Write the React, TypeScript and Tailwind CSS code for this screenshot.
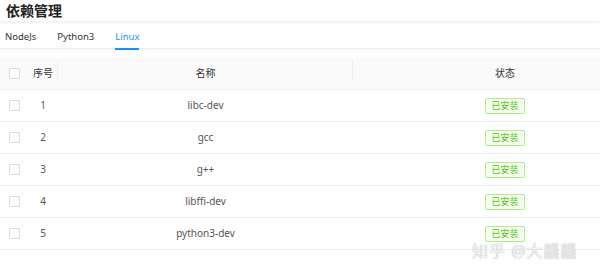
import React from 'react';

const rows = [
  { id: 1, name: 'libc-dev' },
  { id: 2, name: 'gcc' },
  { id: 3, name: 'g++' },
  { id: 4, name: 'libffi-dev' },
  { id: 5, name: 'python3-dev' },
];

const tabs = ['NodeJs', 'Python3', 'Linux'];

const Checkbox: React.FC = () => (
  <span className="block w-[11px] h-[11px] border border-[#d9d9d9] rounded-[2px] bg-white" />
);

const App: React.FC = () => {
  return (
    <div
      className="relative w-[600px] h-[276px] overflow-hidden bg-white text-[#555]"
      style={{ fontFamily: '"Noto Sans", "Noto Sans CJK SC", sans-serif' }}
    >
      {/* title bar */}
      <div className="h-[21px] pl-[6px] flex items-center shadow-[0_2px_3px_rgba(0,0,0,0.06)]">
        <h1 className="text-[14px] leading-none font-bold text-[#222]">依赖管理</h1>
      </div>

      {/* tabs */}
      <div className="mt-[6px] h-[22px] flex gap-[21px] pl-[5px] border-b border-[#eeeeee] shadow-[0_2px_3px_rgba(0,0,0,0.04)]">
        {tabs.map((t) => (
          <div
            key={t}
            className={
              t === 'Linux'
                ? 'relative text-[9.5px] leading-[20px] text-[#1890ff]'
                : 'relative text-[9.5px] leading-[20px] text-[#333]'
            }
          >
            {t}
            {t === 'Linux' && (
              <span className="absolute left-0 right-0 bottom-[-2px] h-[2px] bg-[#1890ff]" />
            )}
          </div>
        ))}
      </div>

      {/* table */}
      <div className="mt-[9px] w-[657px] text-[10px]">
        <div className="flex h-[32px] items-center bg-[#fafafa] border-b border-[#f0f0f0] text-[#333]">
          <div className="w-[28px] flex justify-center">
            <Checkbox />
          </div>
          <div className="w-[30px] text-center relative">
            序号
            <span className="absolute right-0 top-[-5px] h-[20px] w-px bg-[#f0f0f0]" />
          </div>
          <div className="w-[295px] text-center relative">
            名称
            <span className="absolute right-0 top-[-5px] h-[20px] w-px bg-[#ececec]" />
          </div>
          <div className="flex-1 text-center">状态</div>
        </div>
        {rows.map((r) => (
          <div key={r.id} className="flex h-[32px] items-center border-b border-[#f0f0f0]">
            <div className="w-[28px] flex justify-center">
              <Checkbox />
            </div>
            <div className="w-[30px] text-center">{r.id}</div>
            <div className="w-[295px] text-center">{r.name}</div>
            <div className="flex-1 flex justify-center">
              <span className="px-[5px] h-[16px] leading-[14px] text-[9px] text-[#52c41a] bg-[#f6ffed] border border-[#b7eb8f] rounded-[2px]">
                已安装
              </span>
            </div>
          </div>
        ))}
      </div>

      {/* watermark */}
      <div
        className="absolute left-[472px] top-[243px] text-[16px] leading-none text-[#f4f4f4] tracking-[1px]"
        style={{ textShadow: '0 0 1px #999' }}
      >
        知乎 @大龘龘
      </div>
    </div>
  );
};

export default App;
